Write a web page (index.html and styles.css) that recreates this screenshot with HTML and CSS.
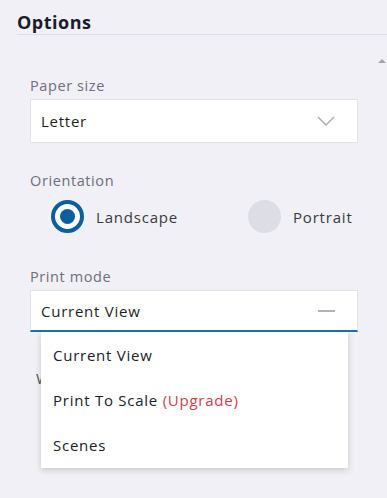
FILE: index.html
```html
<!DOCTYPE html>
<html lang="en">
<head>
    <meta charset="UTF-8">
    <meta name="viewport" content="width=device-width, initial-scale=1.0">
    <title>Options</title>
    <link rel="stylesheet" href="styles.css">
</head>
<body>
    <div class="options-panel">
        <h2 class="panel-title">Options</h2>
        <span class="scroll-up"></span>

        <div class="panel-body">
            <div class="field">
                <label class="field-label">Paper size</label>
                <div class="select-box">
                    <span class="select-value">Letter</span>
                    <svg class="chevron" width="18" height="10" viewBox="0 0 18 10">
                        <path d="M1 1 L9 9 L17 1" fill="none" stroke="#a9a9b3" stroke-width="1.4"/>
                    </svg>
                </div>
            </div>

            <div class="field field-orientation">
                <label class="field-label">Orientation</label>
                <div class="radio-group">
                    <label class="radio-option">
                        <span class="radio radio-checked"><span class="radio-dot"></span></span>
                        Landscape
                    </label>
                    <label class="radio-option">
                        <span class="radio"></span>
                        Portrait
                    </label>
                </div>
            </div>

            <div class="field field-mode">
                <label class="field-label">Print mode</label>
                <div class="select-box select-open">
                    <span class="select-value">Current View</span>
                    <span class="minus"></span>
                </div>
                <ul class="dropdown">
                    <li>Current View</li>
                    <li>Print To Scale <span class="upgrade">(Upgrade)</span></li>
                    <li>Scenes</li>
                </ul>
            </div>

            <div class="field-hidden">Watermark</div>
        </div>
    </div>
</body>
</html>
```

FILE: styles.css
```css
body {
    margin: 0;
    background-color: #f0f0f6;
    font-family: "Open Sans", "Noto Sans", Arial, sans-serif;
    color: #222230;
}

.options-panel {
    position: relative;
    height: 498px;
    overflow: hidden;
}

.panel-title {
    margin: 0 0 0 17px;
    padding-top: 10px;
    height: 24px;
    line-height: 24px;
    font-size: 18px;
    font-weight: bold;
    color: #1b1b29;
    letter-spacing: 0.5px;
    border-bottom: 1px solid #dcdcea;
}

.scroll-up {
    position: absolute;
    top: 59px;
    right: 1px;
    width: 0;
    height: 0;
    border-left: 4px solid transparent;
    border-right: 4px solid transparent;
    border-bottom: 4px solid #a3a3ab;
}

.panel-body {
    width: 328px;
    padding-left: 30px;
}

.field {
    display: flex;
    flex-direction: column;
}

.field:first-child {
    margin-top: 41px;
}

.field-label {
    height: 20px;
    line-height: 20px;
    font-size: 14.5px;
    color: #6e6e7c;
    letter-spacing: 0.6px;
    margin-bottom: 3px;
}

.select-box {
    display: flex;
    align-items: center;
    justify-content: space-between;
    height: 42px;
    padding: 0 22px 0 10px;
    background: #ffffff;
    border: 1px solid #e2e2ea;
}

.select-value {
    font-size: 15px;
    letter-spacing: 0.75px;
    color: #1f1f28;
}

.chevron {
    display: block;
}

.field-orientation {
    margin-top: 28px;
}

.radio-group {
    display: flex;
    margin-top: 6px;
    padding-left: 21px;
}

.radio-option {
    display: flex;
    align-items: center;
    gap: 12px;
    font-size: 15px;
    letter-spacing: 0.8px;
    color: #3a3a44;
}

.radio-option + .radio-option {
    margin-left: 70px;
}

.radio {
    box-sizing: border-box;
    width: 33px;
    height: 33px;
    border-radius: 50%;
    background: #dddde6;
    display: flex;
    align-items: center;
    justify-content: center;
}

.radio-checked {
    background: #ffffff;
    border: 4px solid #0b5f9d;
}

.radio-dot {
    width: 15px;
    height: 15px;
    border-radius: 50%;
    background: #0b5f9d;
}

.field-mode {
    position: relative;
    margin-top: 34px;
}

.select-open {
    height: 39px;
    border-bottom: 2px solid #1d6fae;
}

.minus {
    width: 17px;
    height: 2px;
    background: #b2b2ba;
}

.dropdown {
    position: absolute;
    top: 100%;
    left: 11px;
    width: 307px;
    margin: 0;
    padding: 1px 0 0;
    list-style: none;
    background: #ffffff;
    box-shadow: 0 2px 6px rgba(0, 0, 0, 0.18);
    z-index: 2;
}

.dropdown li {
    height: 45px;
    line-height: 45px;
    padding-left: 12px;
    font-size: 15px;
    letter-spacing: 0.75px;
    color: #20202a;
}

.upgrade {
    color: #c8414c;
}

.field-hidden {
    margin-top: 36px;
    padding-left: 6px;
    font-size: 15px;
    color: #555560;
}
```
